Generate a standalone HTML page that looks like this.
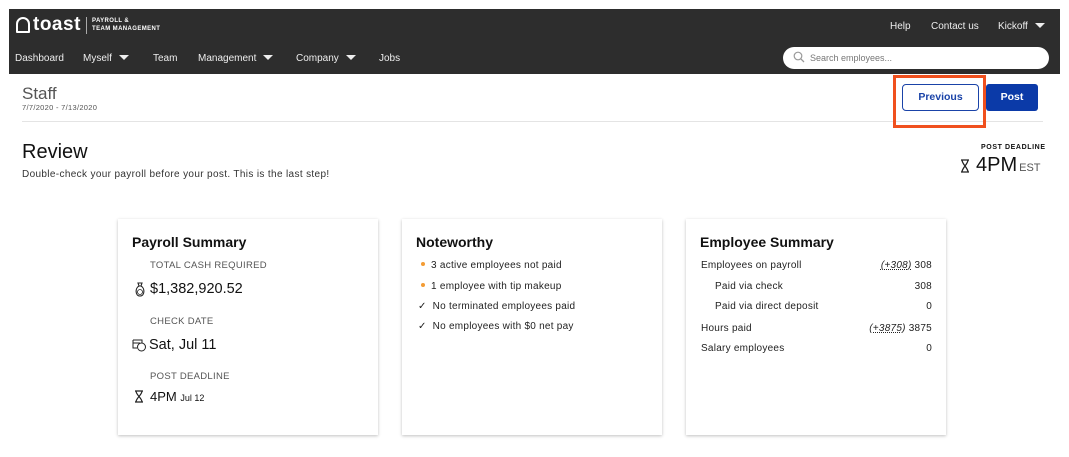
<!DOCTYPE html>
<html><head><style>
*{margin:0;padding:0;box-sizing:border-box}
body{width:1069px;height:457px;background:#fff;font-family:"Liberation Sans",Arial,sans-serif;color:#222;position:relative;overflow:hidden}
.a{position:absolute;white-space:nowrap}
#hdr{position:absolute;left:9px;top:9px;width:1051px;height:65px;background:#2d2d2d}
.nav{color:#eee;font-size:10px}
.tri{display:inline-block;width:0;height:0;border-left:5px solid transparent;border-right:5px solid transparent;border-top:5px solid #eee;margin-left:7px;vertical-align:1px}
.card{position:absolute;top:219px;width:260px;height:216px;background:#fff;box-shadow:0 1px 3px rgba(0,0,0,.25)}
.ct{position:absolute;left:14px;top:15px;font-size:14px;font-weight:bold;color:#111}
.lab{font-size:9.5px;color:#555;letter-spacing:.3px}
.big{font-size:14.5px;color:#111}
.it{font-size:10px;color:#222;letter-spacing:.25px}
.dot{display:inline-block;width:4px;height:4px;border-radius:2px;background:#f39c34;vertical-align:2px}
</style></head><body>
<div id="hdr"></div>
<svg class="a" style="left:14px;top:16px" width="18" height="18" viewBox="0 0 18 18"><path d="M3 16 V8 A6 6 0 0 1 15 8 V16 Z" fill="none" stroke="#fff" stroke-width="2" stroke-linejoin="round"/></svg>
<div class="a" style="left:33px;top:14px;color:#fff;font-size:19px;font-weight:bold;letter-spacing:.5px">toast</div>
<div class="a" style="left:86px;top:17px;width:1px;height:17px;background:#aaa"></div>
<div class="a" style="left:92px;top:17px;color:#fff;font-size:6px;font-weight:bold;line-height:8px;letter-spacing:.4px">PAYROLL &amp;<br>TEAM MANAGEMENT</div>
<div class="a nav" style="left:890px;top:21px">Help</div>
<div class="a nav" style="left:931px;top:21px">Contact us</div>
<div class="a nav" style="left:998px;top:21px">Kickoff<span class="tri"></span></div>
<div class="a nav" style="left:15px;top:53px">Dashboard</div>
<div class="a nav" style="left:83px;top:53px">Myself<span class="tri"></span></div>
<div class="a nav" style="left:153px;top:53px">Team</div>
<div class="a nav" style="left:198px;top:53px">Management<span class="tri"></span></div>
<div class="a nav" style="left:296px;top:53px">Company<span class="tri"></span></div>
<div class="a nav" style="left:379px;top:53px">Jobs</div>
<div class="a" style="left:783px;top:47px;width:266px;height:22px;background:#fff;border-radius:11px"></div>
<svg class="a" style="left:793px;top:51px" width="12" height="12" viewBox="0 0 12 12"><circle cx="5" cy="5" r="3.8" fill="none" stroke="#999" stroke-width="1.2"/><path d="M7.8 7.8L11 11" stroke="#999" stroke-width="1.3"/></svg>
<div class="a" style="left:810px;top:53px;font-size:9px;color:#777">Search employees...</div>
<div class="a" style="left:22px;top:84px;font-size:17px;color:#555">Staff</div>
<div class="a" style="left:22px;top:103px;font-size:7.5px;color:#555;letter-spacing:.3px">7/7/2020 - 7/13/2020</div>
<div class="a" style="left:22px;top:121px;width:1021px;height:1px;background:#e4e4e4"></div>
<div class="a" style="left:893px;top:75px;width:93px;height:53px;border:3px solid #f0501e"></div>
<div class="a" style="left:902px;top:84px;width:77px;height:27px;border:1.5px solid #1a43a8;border-radius:4px;color:#1a43a8;font-size:10.5px;font-weight:bold;text-align:center;line-height:24px">Previous</div>
<div class="a" style="left:986px;top:84px;width:52px;height:27px;background:#0b3aa8;border-radius:3px;color:#fff;font-size:10.5px;font-weight:bold;text-align:center;line-height:27px">Post</div>
<div class="a" style="left:22px;top:141px;font-size:20px;color:#111">Review</div>
<div class="a" style="left:22px;top:169px;font-size:10px;color:#333;letter-spacing:.35px">Double-check your payroll before your post. This is the last step!</div>
<div class="a" style="left:981px;top:144px;font-size:7px;font-weight:bold;letter-spacing:.6px;color:#111">POST DEADLINE</div>
<svg class="a" style="left:960px;top:159px" width="10" height="14" viewBox="0 0 10 14"><path d="M1 1H9M1 13H9M2 1C2 5 8 9 8 13M8 1C8 5 2 9 2 13" fill="none" stroke="#222" stroke-width="1.3"/></svg>
<div class="a" style="left:976px;top:154px;font-size:20px;color:#111">4PM<span style="font-size:11px;color:#555;margin-left:2px">EST</span></div>

<div class="card" style="left:118px">
<div class="ct">Payroll Summary</div>
<div class="a lab" style="left:32px;top:41px">TOTAL CASH REQUIRED</div>
<svg class="a" style="left:16px;top:63px" width="12" height="15" viewBox="0 0 12 15"><path d="M4 1H8L7 4H5Z M5 4C1 6 1 14 6 14C11 14 11 6 7 4" fill="none" stroke="#222" stroke-width="1.1"/><circle cx="6" cy="10" r="2.5" fill="none" stroke="#222" stroke-width=".8"/></svg>
<div class="a big" style="left:32px;top:62px">$1,382,920.52</div>
<div class="a lab" style="left:32px;top:97px">CHECK DATE</div>
<svg class="a" style="left:14px;top:118px" width="15" height="15" viewBox="0 0 15 15"><path d="M1 3H10V6M1 3V11H5M1 6H8" fill="none" stroke="#222" stroke-width="1"/><circle cx="9.5" cy="10" r="4" fill="none" stroke="#222" stroke-width="1"/></svg>
<div class="a big" style="left:31px;top:118px">Sat, Jul 11</div>
<div class="a lab" style="left:32px;top:152px">POST DEADLINE</div>
<svg class="a" style="left:16px;top:171px" width="10" height="13" viewBox="0 0 10 13"><path d="M1 1H9M1 12H9M2 1C2 5 8 8 8 12M8 1C8 5 2 8 2 12" fill="none" stroke="#222" stroke-width="1.2"/></svg>
<div class="a" style="left:32px;top:170px;font-size:13px;color:#111">4PM <span style="font-size:9px">Jul 12</span></div>
</div>

<div class="card" style="left:402px">
<div class="ct">Noteworthy</div>
<div class="a it" style="left:19px;top:41px"><span class="dot"></span>&nbsp;&nbsp;3 active employees not paid</div>
<div class="a it" style="left:19px;top:62px"><span class="dot"></span>&nbsp;&nbsp;1 employee with tip makeup</div>
<div class="a it" style="left:16px;top:82px">✓&nbsp;&nbsp;No terminated employees paid</div>
<div class="a it" style="left:16px;top:102px">✓&nbsp;&nbsp;No employees with $0 net pay</div>
</div>

<div class="card" style="left:686px">
<div class="ct">Employee Summary</div>
<div class="a it" style="left:15px;top:41px">Employees on payroll</div>
<div class="a it" style="right:14px;top:41px"><i style="text-decoration:underline dotted">(+308)</i> 308</div>
<div class="a it" style="left:29px;top:62px">Paid via check</div>
<div class="a it" style="right:14px;top:62px">308</div>
<div class="a it" style="left:29px;top:82px">Paid via direct deposit</div>
<div class="a it" style="right:14px;top:82px">0</div>
<div class="a it" style="left:15px;top:104px">Hours paid</div>
<div class="a it" style="right:14px;top:104px"><i style="text-decoration:underline dotted">(+3875)</i> 3875</div>
<div class="a it" style="left:15px;top:124px">Salary employees</div>
<div class="a it" style="right:14px;top:124px">0</div>
</div>
</body></html>
